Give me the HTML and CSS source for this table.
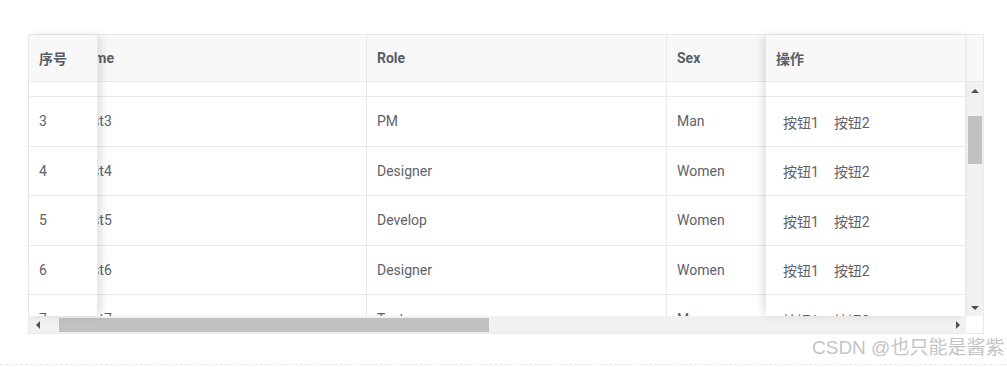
FILE: index.html
```html
<!DOCTYPE html>
<html lang="zh-CN">
<head>
<meta charset="utf-8">
<title>Table</title>
<link rel="stylesheet" href="styles.css">
</head>
<body>
<div class="page">
  <div class="grid">
    <div class="head-view">
      <div class="scroll-x">
        <div class="hrow">
          <div class="cell c-idx">序号</div>
          <div class="cell c-name">Name</div>
          <div class="cell c-role">Role</div>
          <div class="cell c-sex">Sex</div>
          <div class="cell c-addr">Address</div>
          <div class="cell c-op">操作</div>
        </div>
      </div>
    </div>
    <div class="head-fill"></div>

    <div class="body-view">
      <div class="scroll-x scroll-y">
        <div class="row"><div class="cell c-idx">1</div><div class="cell c-name">Test1</div><div class="cell c-role">Develop</div><div class="cell c-sex">Man</div><div class="cell c-addr">Shenzhen</div><div class="cell c-op"></div></div>
        <div class="row"><div class="cell c-idx">2</div><div class="cell c-name">Test2</div><div class="cell c-role">Test</div><div class="cell c-sex">Women</div><div class="cell c-addr">Guangzhou</div><div class="cell c-op"></div></div>
        <div class="row"><div class="cell c-idx">3</div><div class="cell c-name">Test3</div><div class="cell c-role">PM</div><div class="cell c-sex">Man</div><div class="cell c-addr">Shanghai</div><div class="cell c-op"></div></div>
        <div class="row"><div class="cell c-idx">4</div><div class="cell c-name">Test4</div><div class="cell c-role">Designer</div><div class="cell c-sex">Women</div><div class="cell c-addr">Beijing</div><div class="cell c-op"></div></div>
        <div class="row"><div class="cell c-idx">5</div><div class="cell c-name">Test5</div><div class="cell c-role">Develop</div><div class="cell c-sex">Women</div><div class="cell c-addr">Shenzhen</div><div class="cell c-op"></div></div>
        <div class="row"><div class="cell c-idx">6</div><div class="cell c-name">Test6</div><div class="cell c-role">Designer</div><div class="cell c-sex">Women</div><div class="cell c-addr">Hangzhou</div><div class="cell c-op"></div></div>
        <div class="row"><div class="cell c-idx">7</div><div class="cell c-name">Test7</div><div class="cell c-role">Tester</div><div class="cell c-sex">Man</div><div class="cell c-addr">Wuhan</div><div class="cell c-op"></div></div>
        <div class="row"><div class="cell c-idx">8</div><div class="cell c-name">Test8</div><div class="cell c-role">PM</div><div class="cell c-sex">Man</div><div class="cell c-addr">Chengdu</div><div class="cell c-op"></div></div>
      </div>
    </div>

    <div class="vscroll">
      <div class="arrow-box"><span class="tri tri-up"></span></div>
      <div class="vtrack"><div class="vthumb"></div></div>
      <div class="arrow-box"><span class="tri tri-down"></span></div>
    </div>

    <div class="hscroll">
      <div class="arrow-box h"><span class="tri tri-left"></span></div>
      <div class="htrack"><div class="hthumb"></div></div>
      <div class="arrow-box h"><span class="tri tri-right"></span></div>
    </div>
    <div class="corner"></div>

    <div class="fix-left">
      <div class="hrow"><div class="cell c-idx">序号</div></div>
      <div class="fix-body">
        <div class="scroll-y">
          <div class="row"><div class="cell c-idx">1</div></div>
          <div class="row"><div class="cell c-idx">2</div></div>
          <div class="row"><div class="cell c-idx">3</div></div>
          <div class="row"><div class="cell c-idx">4</div></div>
          <div class="row"><div class="cell c-idx">5</div></div>
          <div class="row"><div class="cell c-idx">6</div></div>
          <div class="row"><div class="cell c-idx">7</div></div>
          <div class="row"><div class="cell c-idx">8</div></div>
        </div>
      </div>
    </div>

    <div class="fix-right">
      <div class="hrow"><div class="cell c-op">操作</div></div>
      <div class="fix-body">
        <div class="scroll-y">
          <div class="row"><div class="cell c-op"><button class="btn">按钮1</button><button class="btn">按钮2</button></div></div>
          <div class="row"><div class="cell c-op"><button class="btn">按钮1</button><button class="btn">按钮2</button></div></div>
          <div class="row"><div class="cell c-op"><button class="btn">按钮1</button><button class="btn">按钮2</button></div></div>
          <div class="row"><div class="cell c-op"><button class="btn">按钮1</button><button class="btn">按钮2</button></div></div>
          <div class="row"><div class="cell c-op"><button class="btn">按钮1</button><button class="btn">按钮2</button></div></div>
          <div class="row"><div class="cell c-op"><button class="btn">按钮1</button><button class="btn">按钮2</button></div></div>
          <div class="row"><div class="cell c-op"><button class="btn">按钮1</button><button class="btn">按钮2</button></div></div>
          <div class="row"><div class="cell c-op"><button class="btn">按钮1</button><button class="btn">按钮2</button></div></div>
        </div>
      </div>
    </div>
  </div>
  <div class="dash"></div>
  <div class="watermark">CSDN @也只能是酱紫</div>
</div>
</body>
</html>
```

FILE: styles.css
```css
* { box-sizing: border-box; }

html, body {
  margin: 0;
  background: #fff;
}

body {
  font-family: Roboto, "Noto Sans CJK SC", sans-serif;
  font-size: 14px;
  color: #606266;
}

.page {
  position: relative;
  width: 1007px;
  height: 367px;
  overflow: hidden;
  padding-top: 34px;
}

.grid {
  position: relative;
  margin-left: 28px;
  width: 956px;
  display: grid;
  grid-template-columns: 937px 17px;
  grid-template-rows: 47px 234px 17px;
  border: 1px solid #e8eaec;
}

.head-view,
.body-view {
  overflow: hidden;
}

.scroll-x { margin-left: -31px; }
.scroll-y { margin-top: -84px; }

.hrow,
.row {
  display: flex;
}

.hrow { height: 47px; background: #f8f8f9; }
.row { height: 49.5px; background: #fff; }

.cell {
  flex: none;
  display: flex;
  align-items: center;
  padding: 0 10px;
  border-right: 1px solid #e8eaec;
  border-bottom: 1px solid #e8eaec;
  white-space: nowrap;
  overflow: hidden;
}

.hrow .cell { font-weight: bold; color: #5a5e66; }

.c-idx { width: 69px; }
.c-name { width: 300px; }
.c-role { width: 300px; }
.c-sex { width: 300px; }
.c-addr { width: 300px; }
.c-op { width: 200px; }

.head-fill {
  background: #f8f8f9;
  border-bottom: 1px solid #e8eaec;
}

/* scrollbars */
.vscroll {
  background: #f1f1f1;
  display: flex;
  flex-direction: column;
}

.arrow-box {
  flex: none;
  height: 17px;
  display: flex;
  align-items: center;
  justify-content: center;
}

.arrow-box.h { width: 17px; height: 100%; }

.vtrack { flex: 1; }

.vthumb {
  margin: 17px 1px 0 2px;
  height: 48px;
  background: #c1c1c1;
}

.hscroll {
  background: #f1f1f1;
  display: flex;
}

.htrack { flex: 1; }

.hthumb {
  margin: 2px 0 1px 13px;
  height: 14px;
  width: 430px;
  background: #c1c1c1;
}

.corner { background: #fff; }

.tri { display: block; width: 0; height: 0; }
.tri-up { border-left: 4px solid transparent; border-right: 4px solid transparent; border-bottom: 4px solid #505050; }
.tri-down { border-left: 4px solid transparent; border-right: 4px solid transparent; border-top: 4px solid #505050; }
.tri-left { border-top: 4px solid transparent; border-bottom: 4px solid transparent; border-right: 4px solid #505050; }
.tri-right { border-top: 4px solid transparent; border-bottom: 4px solid transparent; border-left: 4px solid #505050; }

/* fixed columns */
.fix-left,
.fix-right {
  position: absolute;
  top: 0;
  height: 281px;
  background: #fff;
  display: flex;
  flex-direction: column;
}

.fix-left {
  left: 0;
  width: 69px;
  box-shadow: 4px 0 9px -1px rgba(0, 0, 0, 0.13);
}

.fix-right {
  left: 737px;
  width: 200px;
  box-shadow: -4px 0 9px -1px rgba(0, 0, 0, 0.13);
}

.fix-body {
  flex: 1;
  overflow: hidden;
}

.btn {
  font: inherit;
  color: #606266;
  background: none;
  border: 0;
  padding: 0 7px;
  margin: 3px 1px 0 0;
  line-height: 20px;
  cursor: pointer;
}

.dash {
  margin-top: 30px;
  width: 1007px;
  border-top: 1px dashed #e6e6f4;
}

.watermark {
  position: absolute;
  left: 812px;
  top: 337px;
  font-family: "Liberation Sans", "Noto Sans CJK SC", sans-serif;
  font-size: 19px;
  line-height: 22px;
  color: #c4c4c4;
  white-space: nowrap;
}
```
